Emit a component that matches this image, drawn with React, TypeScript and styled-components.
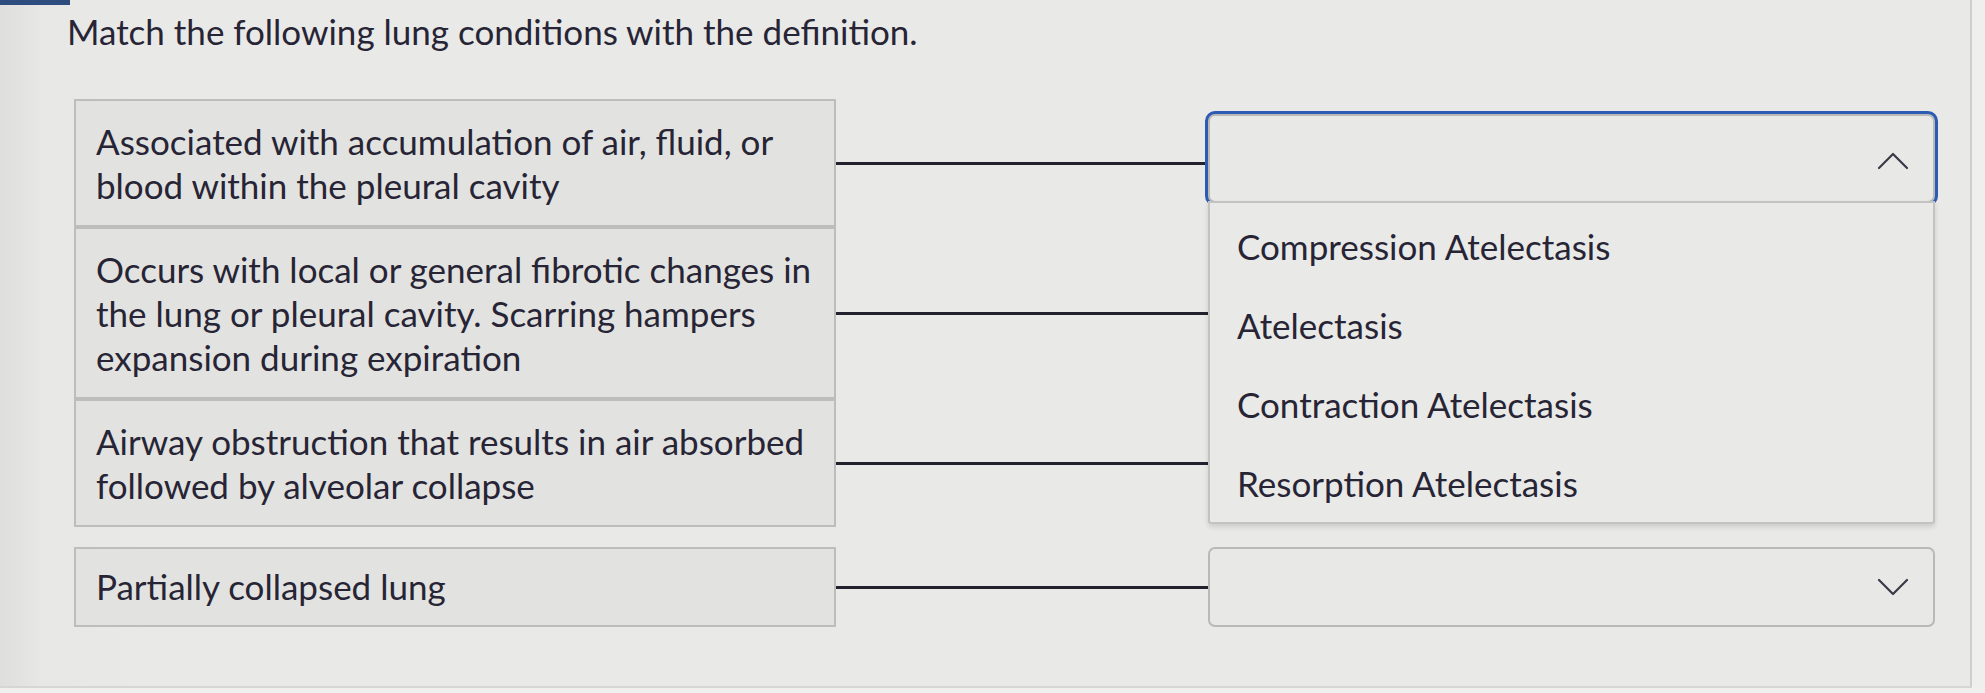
import React from "react";
import styled, { createGlobalStyle, css } from "styled-components";

const GlobalStyle = createGlobalStyle`
  html, body {
    margin: 0;
    padding: 0;
    background: #efefed;
  }
  body {
    font-family: Lato, "Open Sans", "Liberation Sans", sans-serif;
    color: #272535;
  }
  * { box-sizing: border-box; }
`;

const Page = styled.div`
  width: 1985px;
  height: 693px;
  overflow: hidden;
  background: #efefed;
`;

const Panel = styled.main`
  width: 1972px;
  height: 688px;
  border-right: 2px solid #cfcfcd;
  border-bottom: 2px solid #d6d6d4;
  background: linear-gradient(to right, #dedede 0px, #e7e7e5 40px, #e9e9e7 140px);
  display: flex;
  flex-direction: column;
`;

const TopTab = styled.div`
  width: 70px;
  height: 5px;
  background: #2f4c7e;
`;

const Content = styled.section`
  padding: 5px 0 0 67px;
`;

const Title = styled.h1`
  margin: 0;
  font-size: 35px;
  line-height: 42px;
  font-weight: 400;
  color: #272535;
`;

const Board = styled.div`
  margin-top: 47px;
  padding-left: 7px;
  display: flex;
  flex-direction: column;
  gap: 20px;
`;

const Group = styled.div`
  display: flex;
  flex-direction: column;
`;

const Row = styled.div<{ $raised?: boolean }>`
  display: grid;
  grid-template-columns: 762px 372px 727px;
  align-items: center;
  position: relative;
  z-index: ${(p) => (p.$raised ? 2 : 1)};
`;

const Prompt = styled.div<{ $single?: boolean }>`
  align-self: stretch;
  border: 2px solid #bdbdbb;
  background: #e2e2e0;
  padding: ${(p) => (p.$single ? "15px 10px 15px 20px" : "18px 10px 18px 20px")};
  font-size: 35px;
  line-height: 44px;
  color: #272535;
`;

const Connector = styled.div`
  height: 3px;
  background: #23212e;
`;

const SelectBox = styled.div<{ $open?: boolean }>`
  position: relative;
  height: 80px;
  border: 2px solid #b9b9b7;
  border-radius: 7px;
  background: #e8e8e6;
  display: flex;
  align-items: center;
  justify-content: flex-end;
  padding-right: 24px;
  ${(p) =>
    p.$open &&
    css`
      align-self: start;
      margin-top: 15px;
      height: 89px;
      padding-top: 4px;
      box-shadow: 0 0 0 3px #2d5bb4;
    `}
`;

const Chevron = styled.svg`
  width: 32px;
  height: 18px;
  fill: none;
  stroke: #3a3947;
  stroke-width: 2.2;
  stroke-linecap: round;
  stroke-linejoin: round;
`;

const Listbox = styled.ul`
  position: absolute;
  top: 100%;
  left: -2px;
  right: -2px;
  margin: 0;
  padding: 3px 0 0;
  list-style: none;
  background: #e9e9e7;
  border: 2px solid #c3c3c1;
  border-radius: 0 0 3px 3px;
  box-shadow: 0 3px 5px rgba(0, 0, 0, 0.12);
`;

const Option = styled.li`
  height: 79px;
  display: flex;
  align-items: center;
  padding-left: 27px;
  font-size: 35px;
  color: #272535;
`;

const ChevronIcon = ({ up }: { up?: boolean }) => (
  <Chevron viewBox="0 0 32 18" aria-hidden="true">
    {up ? <polyline points="2,16 16,2 30,16" /> : <polyline points="2,2 16,16 30,2" />}
  </Chevron>
);

const options = [
  "Compression Atelectasis",
  "Atelectasis",
  "Contraction Atelectasis",
  "Resorption Atelectasis",
];

const definitions = [
  "Associated with accumulation of air, fluid, or blood within the pleural cavity",
  "Occurs with local or general fibrotic changes in the lung or pleural cavity. Scarring hampers expansion during expiration",
  "Airway obstruction that results in air absorbed followed by alveolar collapse",
];

export default function App() {
  return (
    <>
      <GlobalStyle />
      <Page>
        <Panel>
          <TopTab />
          <Content>
            <Title>Match the following lung conditions with the definition.</Title>
            <Board>
              <Group>
                {definitions.map((text, i) => (
                  <Row key={i} $raised={i === 0}>
                    <Prompt>{text}</Prompt>
                    <Connector />
                    <SelectBox $open={i === 0}>
                      <ChevronIcon up={i === 0} />
                      {i === 0 && (
                        <Listbox role="listbox">
                          {options.map((o) => (
                            <Option key={o} role="option">
                              {o}
                            </Option>
                          ))}
                        </Listbox>
                      )}
                    </SelectBox>
                  </Row>
                ))}
              </Group>
              <Group>
                <Row>
                  <Prompt $single>Partially collapsed lung</Prompt>
                  <Connector />
                  <SelectBox>
                    <ChevronIcon />
                  </SelectBox>
                </Row>
              </Group>
            </Board>
          </Content>
        </Panel>
      </Page>
    </>
  );
}
